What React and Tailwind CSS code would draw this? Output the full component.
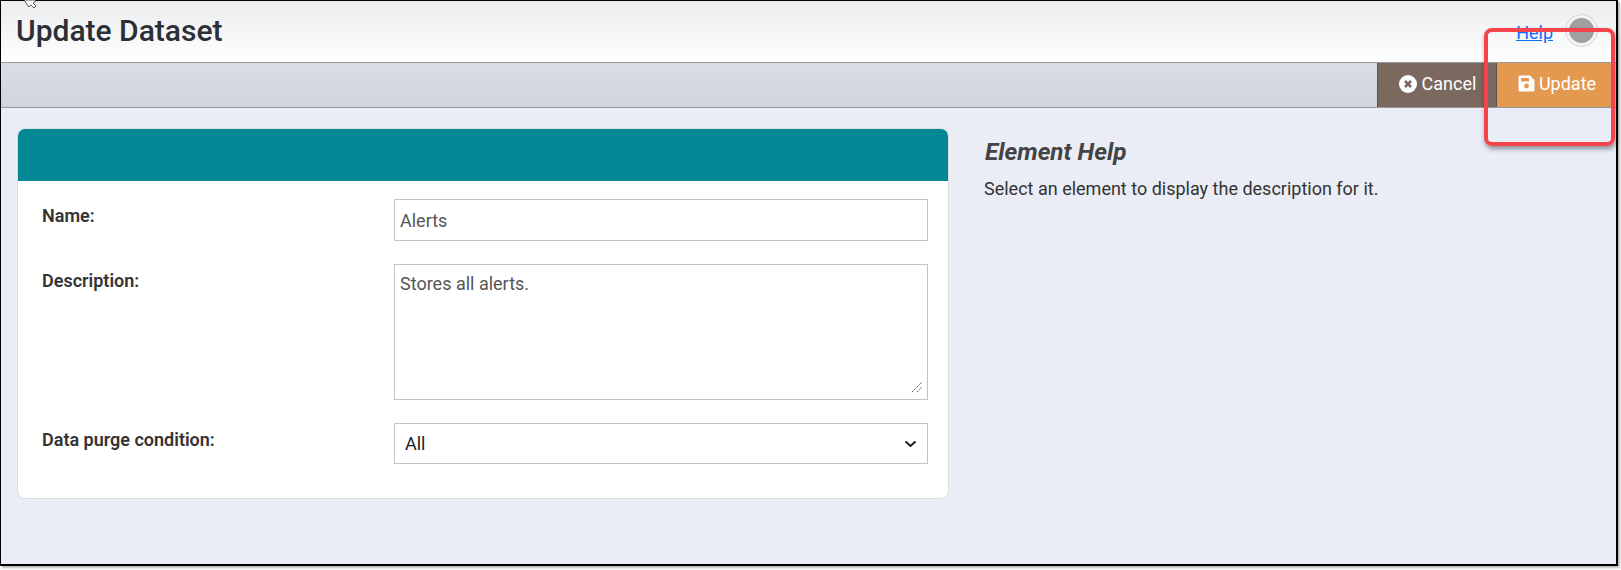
import React from "react";

function Row({ label, children, className = "" }) {
  return (
    <div className={`flex ${className}`}>
      <label className="w-[376px] shrink-0 pl-[24px] pt-[3px] text-[18px] leading-[27px] font-semibold text-[#333]">{label}</label>
      <div className="w-[534px]">{children}</div>
    </div>
  );
}

export default function App() {
  return (
    <div className="w-[1621px] h-[570px] bg-white font-['Roboto',sans-serif] overflow-hidden">
      <div className="relative w-[1618px] h-[566px] border border-black border-b-2 border-r-2 bg-[#eaedf6] flex flex-col shadow-[2px_2px_2px_#bbb]">
        <svg className="absolute left-[22px] top-[-1px]" width="14" height="9" viewBox="0 0 14 9">
          <path d="M1 0 L6 7 L8 5 L11 8 L13 6 L10 3 L13 1 L12 0 Z" fill="#fff" stroke="#333" strokeWidth="0.8" />
        </svg>

        <header className="h-[62px] shrink-0 flex items-start justify-between bg-gradient-to-b from-[#ebecee] to-white border-b border-[#999] pl-[15px] pr-[19px]">
          <h1 className="text-[30px] leading-[36px] mt-[12px] font-medium text-[#2c2f36]">Update Dataset</h1>
          <div className="flex items-center gap-[13px] mt-[14px]">
            <a className="text-[18px] leading-[20px] text-[#0d6efd] underline mt-[4px]">Help</a>
            <div className="w-[31px] h-[31px] rounded-full bg-[#a0a0a0] border-[3px] border-[#f4f4f4] outline outline-[1px] outline-[#d4d4d4]" />
          </div>
        </header>

        <div className="h-[45px] shrink-0 flex justify-end bg-gradient-to-b from-[#dadde6] to-[#d1d4dd] border-b border-[#999] pr-[4px]">
          <button className="w-[120px] flex items-center justify-center gap-[5px] pb-[3px] pl-[1px] bg-[#7b695f] border-x border-[#5f544d] text-white text-[18px]">
            <svg width="18" height="18" viewBox="0 0 18 18">
              <circle cx="9" cy="9" r="9" fill="#fff" />
              <path d="M6 6 L12 12 M12 6 L6 12" stroke="#7b695f" strokeWidth="2.6" />
            </svg>
            Cancel
          </button>
          <button className="w-[115px] flex items-center justify-center gap-[4px] pb-[3px] pl-[5px] bg-[#e3994f] text-white text-[18px]">
            <svg width="17" height="17" viewBox="0 0 17 17">
              <path d="M2 0.5 H12 L16.5 5 V15 A1.5 1.5 0 0 1 15 16.5 H2 A1.5 1.5 0 0 1 0.5 15 V2 A1.5 1.5 0 0 1 2 0.5 Z" fill="#fff" />
              <rect x="3" y="3" width="8" height="3.5" rx="0.5" fill="#e3994f" />
              <circle cx="8.5" cy="11" r="2.4" fill="#e3994f" />
            </svg>
            Update
          </button>
        </div>

        <main className="flex items-start pl-[16px] pt-[20px]">
          <section className="w-[932px] h-[371px] shrink-0 rounded-[8px] overflow-hidden bg-white border border-[#dcdee3]">
            <div className="h-[52px] bg-[#018894]" />
            <div className="pt-[18px] flex flex-col">
              <Row label="Name:" className="h-[42px]">
                <input readOnly value="Alerts" className="w-full h-[42px] px-[5px] border border-[#c4c4c4] text-[18px] text-[#555] outline-none bg-white" />
              </Row>
              <Row label="Description:" className="mt-[23px]">
                <div className="relative">
                  <textarea readOnly value="Stores all alerts." className="block resize-none w-full h-[136px] px-[5px] py-[5px] border border-[#c4c4c4] text-[18px] leading-[27px] text-[#555] outline-none bg-white" />
                  <svg className="absolute right-[5px] bottom-[7px] pointer-events-none" width="12" height="12" viewBox="0 0 12 12">
                    <path d="M1 11 L11 1 M6 11 L11 6" stroke="#555" strokeWidth="1" strokeDasharray="1.5 0.8" fill="none" />
                  </svg>
                </div>
              </Row>
              <Row label="Data purge condition:" className="mt-[23px]">
                <div className="relative">
                  <select className="w-full h-[41px] pl-[10px] border border-[#c4c4c4] text-[18px] text-[#222] outline-none bg-white appearance-none">
                    <option>All</option>
                  </select>
                  <svg className="absolute right-[11px] top-[17px] pointer-events-none" width="13" height="8" viewBox="0 0 13 8">
                    <path d="M1.5 1.5 L6.5 6 L11.5 1.5" fill="none" stroke="#1a1a1a" strokeWidth="2" />
                  </svg>
                </div>
              </Row>
            </div>
          </section>
          <aside className="ml-[35px] pt-[8px]">
            <h2 className="ml-[1px] text-[24.3px] leading-[32px] font-bold italic text-[#444]">Element Help</h2>
            <p className="mt-[7px] text-[18px] leading-[27px] text-[#333]">Select an element to display the description for it.</p>
          </aside>
        </main>

        <div className="absolute left-[1483px] top-[27px] w-[131px] h-[118px] border-[4px] border-[#f5444b] rounded-[8px] shadow-[1px_3px_5px_rgba(0,0,0,0.4)]" />
      </div>
    </div>
  );
}
